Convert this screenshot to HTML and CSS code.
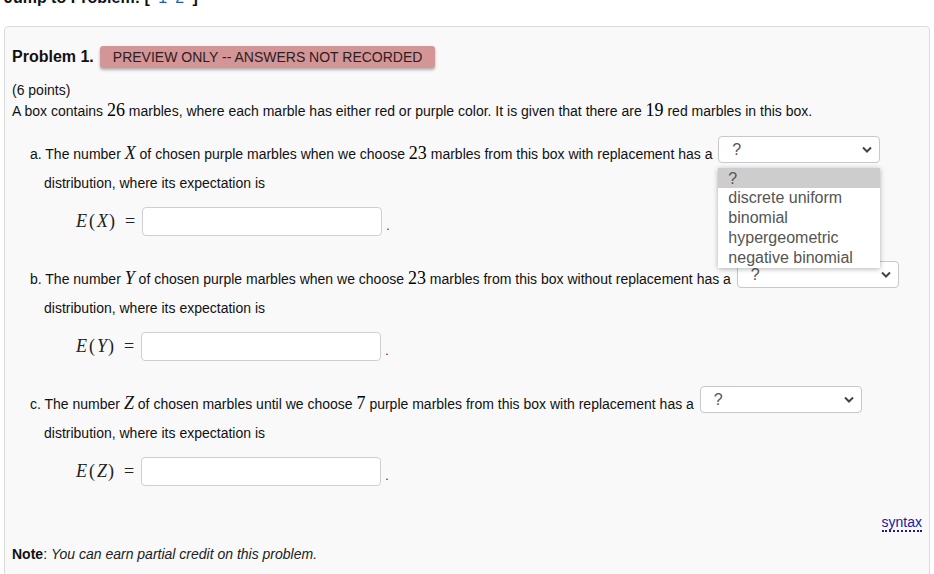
FILE: index.html
```html
<!DOCTYPE html>
<html>
<head>
<meta charset="utf-8">
<link rel="stylesheet" href="styles.css">
</head>
<body>
<div class="jump">Jump to Problem: [ <a class="plink">1</a><a class="plink">2</a> ]</div>
<div class="problem">
  <div class="head">
    <span class="title">Problem 1.</span>
    <span class="badge">PREVIEW ONLY -- ANSWERS NOT RECORDED</span>
  </div>
  <div class="intro">
    <div>(6 points)</div>
    <div>A box contains <span class="num">26</span> marbles, where each marble has either red or purple color. It is given that there are <span class="num">19</span> red marbles in this box.</div>
  </div>

  <div class="part first">
    <div class="qline">a. The number <span class="var">X</span> of chosen purple marbles when we choose <span class="num">23</span> marbles from this box with replacement has a <span class="select open"><span class="sval">?</span><svg class="chev" width="12" height="8" viewBox="0 0 12 8"><path d="M2 1.5 L6 5.5 L10 1.5" fill="none" stroke="#444" stroke-width="2"/></svg><span class="menu"><span class="opt hl">?</span><span class="opt">discrete uniform</span><span class="opt">binomial</span><span class="opt">hypergeometric</span><span class="opt">negative binomial</span></span></span></div>
    <div class="dline">distribution, where its expectation is</div>
    <div class="erow"><span class="math"><span class="var ve">E</span>(<span class="var vx">X</span>)<span class="eq">=</span></span><span class="ans"></span><span class="dot">.</span></div>
  </div>

  <div class="part">
    <div class="qline">b. The number <span class="var">Y</span> of chosen purple marbles when we choose <span class="num">23</span> marbles from this box without replacement has a <span class="select"><span class="sval">?</span><svg class="chev" width="12" height="8" viewBox="0 0 12 8"><path d="M2 1.5 L6 5.5 L10 1.5" fill="none" stroke="#444" stroke-width="2"/></svg></span></div>
    <div class="dline">distribution, where its expectation is</div>
    <div class="erow"><span class="math"><span class="var ve">E</span>(<span class="var vx">Y</span>)<span class="eq">=</span></span><span class="ans"></span><span class="dot">.</span></div>
  </div>

  <div class="part">
    <div class="qline">c. The number <span class="var">Z</span> of chosen marbles until we choose <span class="num">7</span> purple marbles from this box with replacement has a <span class="select"><span class="sval">?</span><svg class="chev" width="12" height="8" viewBox="0 0 12 8"><path d="M2 1.5 L6 5.5 L10 1.5" fill="none" stroke="#444" stroke-width="2"/></svg></span></div>
    <div class="dline">distribution, where its expectation is</div>
    <div class="erow"><span class="math"><span class="var ve">E</span>(<span class="var vx">Z</span>)<span class="eq">=</span></span><span class="ans"></span><span class="dot">.</span></div>
  </div>

  <div class="syntax"><a class="slink">syntax</a></div>
  <div class="note"><b>Note</b>: <i>You can earn partial credit on this problem.</i></div>
</div>
</body>
</html>
```

FILE: styles.css
```css
html, body {
  margin: 0;
  padding: 0;
  background: #ffffff;
  overflow: hidden;
}
body {
  padding: 0 4px;
  font-family: "Liberation Sans", Arial, sans-serif;
  font-size: 14px;
  color: #111;
}
.jump {
  margin-top: -12px;
  height: 20px;
  line-height: 20px;
  font-size: 16px;
  font-weight: bold;
}
.plink {
  color: #1a5ea8;
  font-weight: normal;
  margin: 0 4px;
}
.problem {
  margin-top: 18px;
  width: 910px;
  height: 600px;
  border: 1px solid #dcdcdc;
  border-radius: 4px;
  background: #f9f9f9;
  padding: 19px 7px 0 7px;
}
.head {
  display: flex;
  align-items: center;
  height: 22px;
  gap: 6px;
}
.title {
  font-size: 16px;
  font-weight: bold;
}
.badge {
  display: inline-flex;
  align-items: center;
  height: 22px;
  padding: 0 13px;
  background: #d39596;
  color: #2e2020;
  border-radius: 3px;
  box-shadow: 0 2px 3px rgba(0,0,0,0.3);
  font-size: 14px;
}
.intro {
  margin-top: 12px;
  line-height: 20px;
}
.num {
  font-family: "Liberation Serif", "DejaVu Serif", serif;
  font-size: 18px;
  color: #000;
}
.var {
  font-family: "Liberation Serif", "DejaVu Serif", serif;
  font-style: italic;
  font-size: 18px;
}
.part {
  margin-top: 27px;
  padding-left: 18px;
}
.part.first {
  margin-top: 17px;
}
.qline {
  height: 30px;
  line-height: 30px;
  white-space: nowrap;
}
.select {
  position: relative;
  display: inline-block;
  vertical-align: top;
  width: 160px;
  height: 25px;
  line-height: 25px;
  margin-left: 2px;
  margin-top: -2px;
  border: 1px solid #c8c8c8;
  border-radius: 4px;
  background: #ffffff;
  font-size: 16px;
  color: #555;
}
.sval {
  padding-left: 13px;
}
.chev {
  position: absolute;
  right: 6px;
  top: 9px;
}
.menu {
  position: absolute;
  left: -1px;
  top: 31px;
  width: 162px;
  background: #ffffff;
  box-shadow: 0 1px 5px rgba(0,0,0,0.3);
  display: flex;
  flex-direction: column;
  z-index: 5;
}
.opt {
  height: 20px;
  line-height: 20px;
  padding-left: 10px;
  color: #555;
  font-size: 16px;
}
.opt.hl {
  background: #cdcdcd;
  height: 19px;
  line-height: 19px;
  padding-top: 1px;
}
.dline {
  margin-top: 5px;
  line-height: 20px;
  padding-left: 14px;
}
.erow {
  margin-top: 14px;
  padding-left: 46px;
  display: flex;
  align-items: center;
  height: 29px;
}
.math {
  font-family: "Liberation Serif", "DejaVu Serif", serif;
  font-size: 18px;
  color: #222;
  display: inline-flex;
  align-items: center;
}
.ve {
  margin-right: 2px;
}
.vx {
  margin: 0 1px 0 2px;
}
.eq {
  margin: 0 7px 0 10px;
}
.ans {
  display: inline-block;
  width: 238px;
  height: 27px;
  border: 1px solid #cfcfcf;
  border-radius: 4px;
  background: #ffffff;
}
.dot {
  margin-left: 4px;
  align-self: flex-end;
  line-height: 20px;
  font-size: 12px;
  color: #222;
}
.syntax {
  margin-top: 26px;
  line-height: 20px;
  text-align: right;
}
.slink {
  color: #1a1aa0;
  border-bottom: 2px dotted #1a1aa0;
  line-height: 16px;
}
.note {
  margin-top: 12px;
  line-height: 20px;
}
.note i {
  color: #222;
}
```
